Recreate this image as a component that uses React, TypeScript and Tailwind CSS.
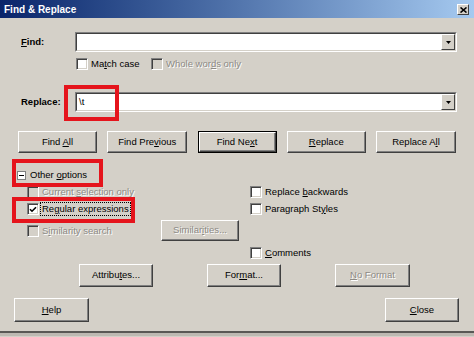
import React from "react";

const dis = "text-[#8d8a85] [text-shadow:1px_1px_0_#ffffff]";

const Check = ({ checked, disabled }: { checked?: boolean; disabled?: boolean }) => (
  <span
    className={`w-[12px] h-[12px] shrink-0 flex items-center justify-center border border-t-[#808080] border-l-[#808080] border-r-white border-b-white shadow-[inset_1px_1px_0_#404040,inset_-1px_-1px_0_#d4d0c8] ${
      disabled ? "bg-[#d4d0c8]" : "bg-white"
    }`}
  >
    {checked && (
      <svg width="8" height="7" viewBox="0 0 8 7">
        <path d="M1 3.2 L3 5.2 L7 1.2" stroke="#000" strokeWidth="1.6" fill="none" />
      </svg>
    )}
  </span>
);

const Opt = ({
  checked,
  disabled,
  focus,
  children,
}: {
  checked?: boolean;
  disabled?: boolean;
  focus?: boolean;
  children: React.ReactNode;
}) => (
  <div className="flex items-center h-[14px]">
    <Check checked={checked} disabled={disabled} />
    <span
      className={`ml-[2px] px-[1px] leading-[12px] ${disabled ? dis : "text-black"} ${
        focus ? "outline-1 outline-dotted outline-black" : ""
      }`}
    >
      {children}
    </span>
  </div>
);

const Btn = ({
  children,
  w,
  def,
  disabled,
}: {
  children: React.ReactNode;
  w: string;
  def?: boolean;
  disabled?: boolean;
}) => (
  <div className={`${w} h-full ${def ? "border border-black" : ""}`}>
    <div
      className={`w-full h-full flex items-center justify-center bg-[#d4d0c8] border border-t-white border-l-white border-r-[#404040] border-b-[#404040] shadow-[inset_-1px_-1px_0_#808080] ${
        disabled ? dis : "text-black"
      }`}
    >
      <span>{children}</span>
    </div>
  </div>
);

const U = ({ children }: { children: React.ReactNode }) => <span className="underline underline-offset-1">{children}</span>;

const Combo = ({ value }: { value?: string }) => (
  <div className="w-[382px] h-full flex border border-t-[#808080] border-l-[#808080] border-r-white border-b-white">
    <div className="flex-1 flex bg-white border border-t-[#404040] border-l-[#404040] border-r-[#d4d0c8] border-b-[#d4d0c8]">
      <div className="flex-1 flex items-center pl-[2px] text-black">{value}</div>
      <div className="w-[14px] h-full flex items-center justify-center bg-[#d4d0c8] border border-t-white border-l-white border-r-[#404040] border-b-[#404040]">
        <svg width="5" height="3" viewBox="0 0 5 3">
          <path d="M0 0 H5 L2.5 3 Z" fill="#000" />
        </svg>
      </div>
    </div>
  </div>
);

export default function App() {
  return (
    <div className="relative w-[474px] h-[337px] overflow-hidden bg-[#d4d0c8] font-['Liberation_Sans',Arial,sans-serif] text-[9.5px] text-black">
      {/* title bar */}
      <div className="h-[18px] flex items-center justify-between pl-[4px] pr-[5px] bg-gradient-to-r from-[#0a246a] to-[#a6caf0]">
        <span className="text-white font-bold text-[10px]">Find &amp; Replace</span>
        <div className="w-[12px] h-[11px] mt-[1px] flex items-center justify-center bg-[#d4d0c8] border border-t-white border-l-white border-r-[#404040] border-b-[#404040]">
          <svg width="7" height="6" viewBox="0 0 7 6">
            <path d="M0.5 0.5 L6.5 5.5 M6.5 0.5 L0.5 5.5" stroke="#000" strokeWidth="1.6" />
          </svg>
        </div>
      </div>

      {/* find */}
      <div className="mt-[14px] h-[20px] flex items-center">
        <div className="w-[75px] pl-[21px] font-bold">
          <U>F</U>ind:
        </div>
        <Combo />
      </div>
      <div className="mt-[5px] h-[14px] flex pl-[76px]">
        <div className="w-[75px]">
          <Opt>
            Ma<U>t</U>ch case
          </Opt>
        </div>
        <Opt disabled>
          Whole wor<U>d</U>s only
        </Opt>
      </div>

      {/* replace */}
      <div className="mt-[21px] h-[20px] flex items-center">
        <div className="w-[75px] pl-[21px] font-bold">Replace:</div>
        <Combo value="\t" />
      </div>

      {/* buttons */}
      <div className="mt-[19px] h-[22px] flex justify-between pl-[18px] pr-[18px]">
        <Btn w="w-[79px]">
          Find <U>A</U>ll
        </Btn>
        <Btn w="w-[80px]">
          Find Pre<U>v</U>ious
        </Btn>
        <Btn w="w-[79px]" def>
          Find Ne<U>x</U>t
        </Btn>
        <Btn w="w-[79px]">
          <U>R</U>eplace
        </Btn>
        <Btn w="w-[80px]">
          Replace A<U>l</U>l
        </Btn>
      </div>

      {/* other options */}
      <div className="mt-[15px] h-[14px] flex items-center pl-[17px]">
        <div className="w-[9px] h-[9px] border border-[#808080] bg-white flex items-center justify-center">
          <div className="w-[5px] h-[1px] bg-black" />
        </div>
        <span className="ml-[4px]">
          Other <U>o</U>ptions
        </span>
      </div>

      <div className="mt-[3px] h-[14px] flex">
        <div className="w-[250px] pl-[27px]">
          <Opt disabled>
            Current <U>s</U>election only
          </Opt>
        </div>
        <Opt>
          Replace <U>b</U>ackwards
        </Opt>
      </div>
      <div className="mt-[3px] h-[14px] flex">
        <div className="w-[250px] pl-[27px]">
          <Opt checked focus>
            Re<U>g</U>ular expressions
          </Opt>
        </div>
        <Opt>
          Paragraph St<U>y</U>les
        </Opt>
      </div>
      <div className="mt-[4px] h-[21px] flex items-center pl-[27px]">
        <div className="w-[134px]">
          <Opt disabled>
            S<U>i</U>milarity search
          </Opt>
        </div>
        <Btn w="w-[78px]" disabled>
          Similar<U>i</U>ties...
        </Btn>
      </div>
      <div className="mt-[5px] h-[14px] flex pl-[250px]">
        <Opt>
          <U>C</U>omments
        </Opt>
      </div>

      {/* attribute buttons */}
      <div className="mt-[4px] h-[23px] flex gap-[54px] pl-[79px]">
        <Btn w="w-[74px]">
          Attribu<U>t</U>es...
        </Btn>
        <Btn w="w-[74px]">
          For<U>m</U>at...
        </Btn>
        <Btn w="w-[75px]" disabled>
          <U>N</U>o Format
        </Btn>
      </div>

      {/* bottom */}
      <div className="mt-[11px] h-[24px] flex justify-between pl-[14px] pr-[15px]">
        <Btn w="w-[75px]">
          <U>H</U>elp
        </Btn>
        <Btn w="w-[74px]">
          <U>C</U>lose
        </Btn>
      </div>
      <div className="mt-[9px] h-[2px] bg-[#5a5855]" />
      <div className="h-[3px] bg-[#bdb9b2]" />

      {/* annotation boxes */}
      <div className="absolute left-[64px] top-[85px] w-[55px] h-[36px] border-4 border-[#e5141c]" />
      <div className="absolute left-[12px] top-[159px] w-[91px] h-[28px] border-4 border-[#e5141c]" />
      <div className="absolute left-[12px] top-[197px] w-[123px] h-[26px] border-4 border-[#e5141c]" />
    </div>
  );
}
